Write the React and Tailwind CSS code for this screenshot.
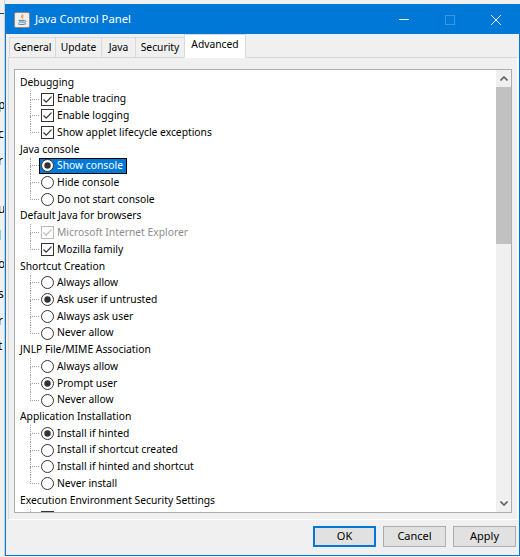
import React from "react";

const sections = [
  {
    title: "Debugging",
    items: [
      { kind: "check", label: "Enable tracing", on: true },
      { kind: "check", label: "Enable logging", on: true },
      { kind: "check", label: "Show applet lifecycle exceptions", on: true },
    ],
  },
  {
    title: "Java console",
    items: [
      { kind: "radio", label: "Show console", on: true, focused: true },
      { kind: "radio", label: "Hide console" },
      { kind: "radio", label: "Do not start console" },
    ],
  },
  {
    title: "Default Java for browsers",
    items: [
      { kind: "check", label: "Microsoft Internet Explorer", on: true, disabled: true },
      { kind: "check", label: "Mozilla family", on: true },
    ],
  },
  {
    title: "Shortcut Creation",
    items: [
      { kind: "radio", label: "Always allow" },
      { kind: "radio", label: "Ask user if untrusted", on: true },
      { kind: "radio", label: "Always ask user" },
      { kind: "radio", label: "Never allow" },
    ],
  },
  {
    title: "JNLP File/MIME Association",
    items: [
      { kind: "radio", label: "Always allow" },
      { kind: "radio", label: "Prompt user", on: true },
      { kind: "radio", label: "Never allow" },
    ],
  },
  {
    title: "Application Installation",
    items: [
      { kind: "radio", label: "Install if hinted", on: true },
      { kind: "radio", label: "Install if shortcut created" },
      { kind: "radio", label: "Install if hinted and shortcut" },
      { kind: "radio", label: "Never install" },
    ],
  },
  {
    title: "Execution Environment Security Settings",
    items: [
      { kind: "check", label: "Allow user to grant permissions to signed content", on: false },
      { kind: "check", label: "Show sandbox warning banner", on: true },
      { kind: "check", label: "Allow user to accept JNLP security requests", on: true },
    ],
  },
];

const tabs = [
  { name: "General", w: "w-[47px]" },
  { name: "Update", w: "w-[47px]" },
  { name: "Java", w: "w-[35px]" },
  { name: "Security", w: "w-[50px]" },
  { name: "Advanced", w: "w-[62px]" },
];

// bits of the window that sits behind the dialog
const behind = [
  { c: "p", mt: "mt-[95px]" },
  { c: "c", mt: "mt-[9px]" },
  { c: "r", mt: "mt-[7px]" },
  { c: "u", mt: "mt-[28px]" },
  { c: "l", mt: "mt-[7px]" },
  { c: "o", mt: "mt-[8px]" },
  { c: "s", mt: "mt-[10px]" },
  { c: "r", mt: "mt-[7px]" },
  { c: "t", mt: "mt-[5px]" },
];

const CheckBox = ({ on, disabled }) => (
  <svg width="13" height="13" viewBox="0 0 13 13" className="shrink-0">
    <rect x="0.5" y="0.5" width="12" height="12" fill="#fff" stroke={disabled ? "#bcbcbc" : "#333"} />
    {on && (
      <path d="M2.5 6.5 L5.2 9.2 L10.5 3.6" fill="none" stroke={disabled ? "#bcbcbc" : "#333"} strokeWidth="1.2" />
    )}
  </svg>
);

const Radio = ({ on }) => (
  <svg width="13" height="13" viewBox="0 0 13 13" className="shrink-0">
    <circle cx="6.5" cy="6.5" r="6" fill="#fff" stroke="#333" />
    {on && <circle cx="6.5" cy="6.5" r="3.2" fill="#333" />}
  </svg>
);

const JavaIcon = () => (
  <svg width="16" height="16" viewBox="0 0 16 16">
    <rect x="0.5" y="0.5" width="15" height="15" rx="1.5" fill="#efefef" stroke="#8a8a8a" />
    <path d="M8.2 2 C10 3.6 6.4 4.6 7.6 6.6 C6 5.6 7.6 4 8.2 2 Z" fill="#e76f00" />
    <path d="M9.6 3.8 C8 4.8 8.6 5.6 8.6 6.6" fill="none" stroke="#e76f00" strokeWidth="0.9" />
    <path d="M4.5 8.4 H10.5 M4.8 10 H10.2 M4 11.8 C6 12.8 10 12.8 12 11.6" fill="none" stroke="#5382a1" strokeWidth="1" />
    <path d="M10.5 8.6 C12.4 8.4 12.4 10.4 10.2 10.4" fill="none" stroke="#5382a1" strokeWidth="0.9" />
  </svg>
);

const Connector = ({ last }) => (
  <div className="flex flex-col w-[9px] h-full shrink-0">
    <div className="flex-1 border-l border-b border-dotted border-[#a0a0a0]" />
    <div className={`flex-1 border-l border-dotted ${last ? "border-transparent" : "border-[#a0a0a0]"}`} />
  </div>
);

const TreeItem = ({ item, last }) => (
  <div className="flex items-center h-[16.72px] pl-[10px]">
    <Connector last={last} />
    <div
      className={`flex items-center h-full gap-[3px] pl-[1px] pr-[3px] border ${
        item.focused ? "bg-[#0078d7] border-black text-white" : "border-transparent"
      } ${item.disabled ? "text-[#8d8d8d]" : ""}`}
    >
      {item.kind === "check" ? <CheckBox on={item.on} disabled={item.disabled} /> : <Radio on={item.on} />}
      <span className="whitespace-nowrap">{item.label}</span>
    </div>
  </div>
);

export default function App() {
  return (
    <div
      className="relative w-[520px] h-[557px] overflow-hidden bg-[#f0f0f0] text-[10.3px] text-black"
      style={{ fontFamily: '"Noto Sans", "Open Sans", sans-serif' }}
    >
      {/* window behind the dialog */}
      <div className="absolute left-0 top-0 w-[5px] h-full overflow-hidden bg-[#f0f0f0] border-r border-[#cfcfcf]">
        <div className="h-[13px]" />
        <div className="h-px bg-[#1f3a6b]" />
        <div className="-mt-[14px]">
          {behind.map((b, i) => (
            <div key={i} className={`${b.mt} h-[20px] flex items-center -ml-[2px] text-[12px] leading-none`}>
              {b.c}
            </div>
          ))}
        </div>
      </div>

      {/* dialog */}
      <div className="absolute left-[5px] top-[4px] w-[515px] h-[552px] flex flex-col border border-[#0078d7] bg-[#f0f0f0]">
        <div className="flex items-center h-[29px] bg-[#0078d7] text-white shrink-0">
          <div className="pl-[8px] pr-[5px] flex items-center">
            <JavaIcon />
          </div>
          <span className="text-[11.3px]">Java Control Panel</span>
          <div className="ml-auto flex h-full">
            <div className="w-[46px] flex items-center justify-center">
              <div className="w-[10px] h-px bg-white" />
            </div>
            <div className="w-[46px] flex items-center justify-center">
              <div className="w-[10px] h-[10px] border border-[#3d96e0]" />
            </div>
            <div className="w-[46px] flex items-center justify-center">
              <svg width="10" height="10" viewBox="0 0 10 10">
                <path d="M0 0 L10 10 M10 0 L0 10" stroke="#fff" strokeWidth="1" />
              </svg>
            </div>
          </div>
        </div>

        <div className="flex-1 flex flex-col pl-[2px] pr-px">
          {/* tabs */}
          <div className="flex items-end h-[24px] pl-[2px]">
            {tabs.map((t) => {
              const sel = t.name === "Advanced";
              return (
                <div
                  key={t.name}
                  className={`${t.w} -ml-px border border-[#d9d9d9] flex items-center justify-center ${
                    sel ? "h-[24px] bg-white border-b-white z-10 pb-[3px]" : "h-[21px] bg-[#f0f0f0]"
                  }`}
                >
                  {t.name}
                </div>
              );
            })}
          </div>

          {/* tab panel */}
          <div className="-mt-px h-[463px] border border-[#d9d9d9] border-r-white border-b-white pt-[11px] px-[5px]">
            <div className="flex h-[444px] border border-[#adadad] bg-white">
              <div className="flex-1 overflow-hidden pt-[4px] pl-[5px]">
                {sections.map((s) => (
                  <div key={s.title}>
                    <div className="h-[16.72px] flex items-center whitespace-nowrap">{s.title}</div>
                    {s.items.map((it, i) => (
                      <TreeItem key={it.label} item={it} last={i === s.items.length - 1} />
                    ))}
                  </div>
                ))}
              </div>
              {/* scrollbar */}
              <div className="w-[15px] flex flex-col bg-[#f0f0f0]">
                <div className="h-[17px] flex items-center justify-center">
                  <svg width="8" height="5" viewBox="0 0 8 5">
                    <path d="M0.5 4.5 L4 1 L7.5 4.5" fill="none" stroke="#606060" strokeWidth="1.6" />
                  </svg>
                </div>
                <div className="h-[157px] bg-[#c1c1c1]" />
                <div className="flex-1" />
                <div className="h-[17px] flex items-center justify-center">
                  <svg width="8" height="5" viewBox="0 0 8 5">
                    <path d="M0.5 0.5 L4 4 L7.5 0.5" fill="none" stroke="#606060" strokeWidth="1.6" />
                  </svg>
                </div>
              </div>
            </div>
          </div>

          {/* buttons */}
          <div className="flex justify-end gap-[7px] pt-[6px] pr-[2px] text-[11px]">
            <button className="w-[63px] h-[21px] bg-[#e1e1e1] border-2 border-[#0078d7] flex items-center justify-center">
              OK
            </button>
            <button className="w-[63px] h-[21px] bg-[#e1e1e1] border border-[#adadad] flex items-center justify-center">
              Cancel
            </button>
            <button className="w-[63px] h-[21px] bg-[#e1e1e1] border border-[#adadad] flex items-center justify-center">
              Apply
            </button>
          </div>
        </div>
      </div>
    </div>
  );
}
